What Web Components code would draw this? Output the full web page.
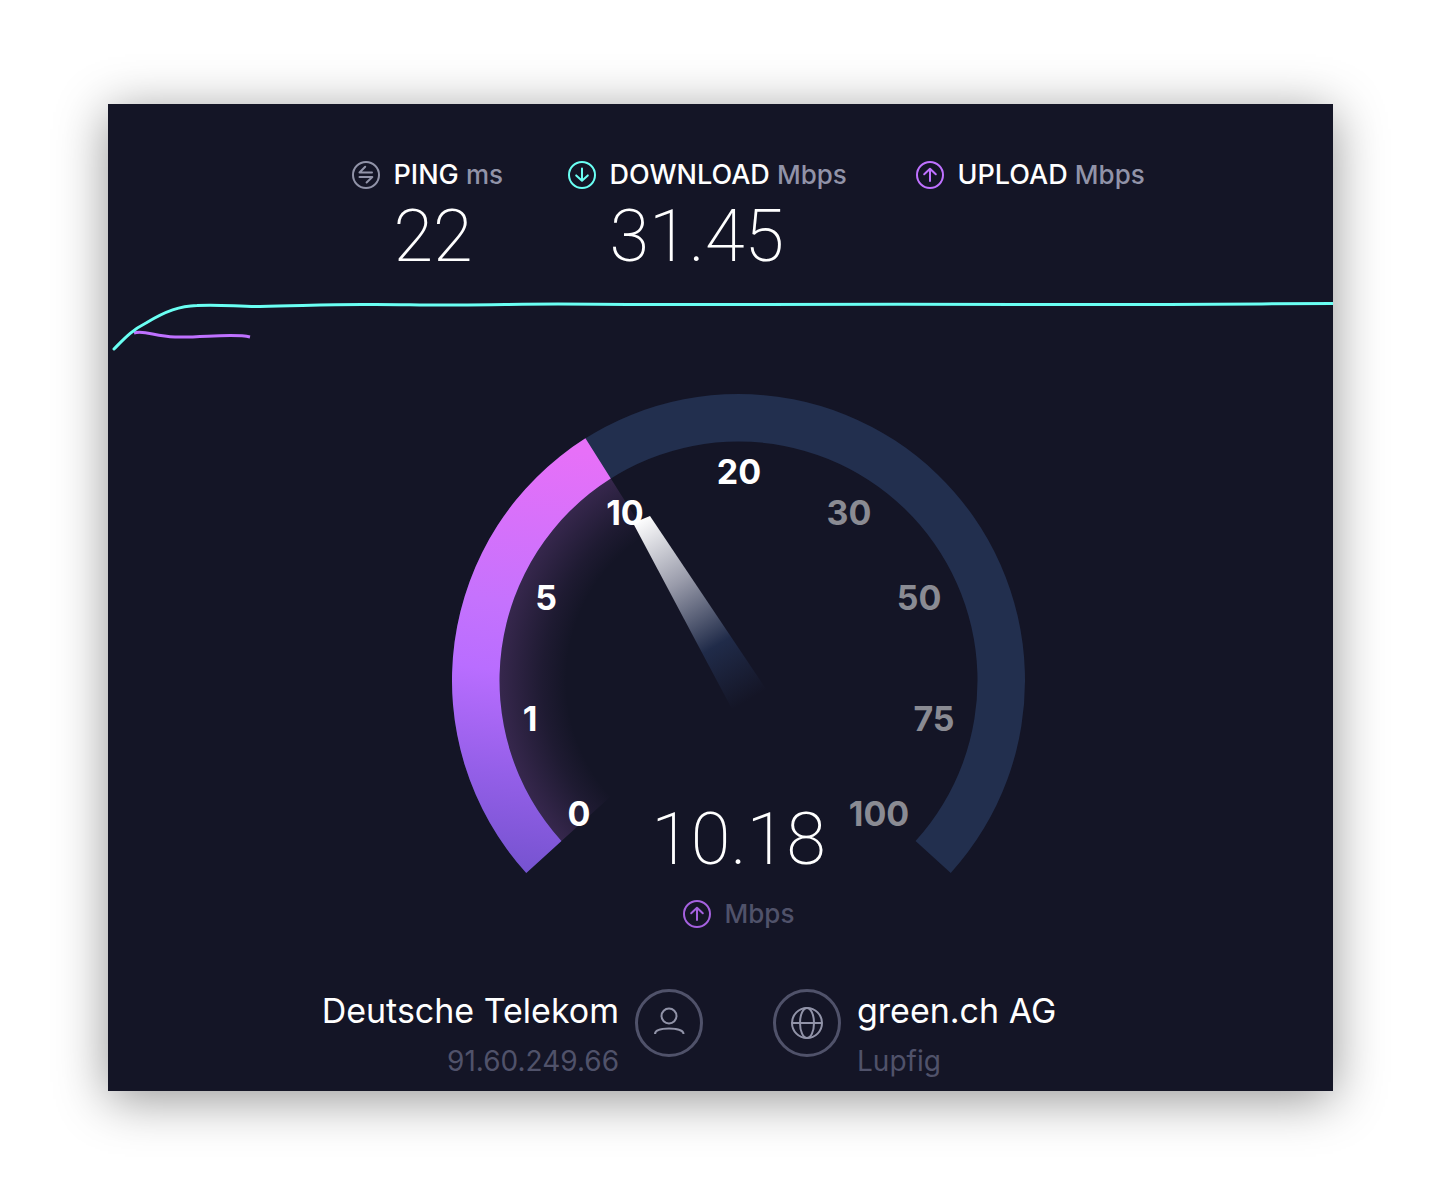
<!DOCTYPE html>
<html lang="en">
<head>
<meta charset="utf-8">
<meta name="viewport" content="width=device-width, initial-scale=1">
<title>Speed test</title>
<style>
  :root {
    --card: #141526;
    --track: #222f4e;
    --muted: #9193a8;
    --dim: #50526a;
    --download: #6afff3;
    --upload: #bf71ff;
  }
  body {
    margin: 0;
    padding: 104px 108px;
    background: #fff;
    color: #fff;
    font-family: Inter, "Open Sans", sans-serif;
  }
</style>
</head>
<body>
<speed-card>
  <speed-results slot="results">
    <speed-metric icon="ping" label="PING" unit="ms">22</speed-metric>
    <speed-metric icon="download" label="DOWNLOAD" unit="Mbps">31.45</speed-metric>
    <speed-metric icon="upload" label="UPLOAD" unit="Mbps"></speed-metric>
  </speed-results>
  <speed-chart slot="chart"></speed-chart>
  <speed-gauge slot="gauge" unit="Mbps">10.18</speed-gauge>
  <speed-hosts slot="hosts">
    <speed-host class="client" icon="user">
      Deutsche Telekom
      <span slot="detail">91.60.249.66</span>
    </speed-host>
    <speed-host icon="globe">
      green.ch AG
      <span slot="detail">Lupfig</span>
    </speed-host>
  </speed-hosts>
</speed-card>

<script>
const icons = {
  ping: `<svg viewBox="0 0 28 28" aria-hidden="true">
    <circle cx="14" cy="14" r="13"/>
    <path d="M20 11.5H7.5L13.2 5.8M7.5 16H20.3L14.6 21.5"/>
  </svg>`,
  download: `<svg viewBox="0 0 28 28" aria-hidden="true">
    <circle cx="14" cy="14" r="13"/>
    <path d="M14 7.5V19.5M8.2 14.4L14 19.8L19.8 14.4"/>
  </svg>`,
  upload: `<svg viewBox="0 0 28 28" aria-hidden="true">
    <circle cx="14" cy="14" r="13"/>
    <path d="M14 20V8M8.2 13.2L14 7.7L19.8 13.2"/>
  </svg>`,
  user: `<svg viewBox="0 0 68 68" aria-hidden="true">
    <circle cx="34" cy="27" r="7.5"/>
    <path d="M20 45C20 41 27 39.5 34 39.5S48.500 41 48.5 45"/>
  </svg>`,
  globe: `<svg viewBox="0 0 68 68" aria-hidden="true">
    <circle cx="34" cy="34" r="15"/>
    <ellipse cx="34" cy="34" rx="7" ry="15"/>
    <path d="M19 34H49"/>
  </svg>`
};

class SpeedCard extends HTMLElement {
  constructor() {
    super();
    this.attachShadow({ mode: 'open' });
    this.shadowRoot.innerHTML = `
      <style>
        :host {
          display: block;
          padding: 57px 0 14px;
          background: var(--card);
          box-shadow: 0 8px 48px rgba(0, 0, 0, 0.42);
        }
      </style>
      <slot name="results"></slot>
      <slot name="chart"></slot>
      <slot name="gauge"></slot>
      <slot name="hosts"></slot>
    `;
  }
}

class SpeedResults extends HTMLElement {
  constructor() {
    super();
    this.attachShadow({ mode: 'open' });
    this.shadowRoot.innerHTML = `
      <style>
        :host {
          display: grid;
          grid-template-columns: 152px 284px 232px;
          justify-content: center;
          gap: 64px;
          padding-left: 58px;
          height: 127px;
        }
      </style>
      <slot></slot>
    `;
  }
}

class SpeedMetric extends HTMLElement {
  constructor() {
    super();
    this.attachShadow({ mode: 'open' });
  }

  connectedCallback() {
    const icon = this.getAttribute('icon');
    this.shadowRoot.innerHTML = `
      <style>
        :host {
          display: grid;
          grid-template-columns: 28px 1fr;
          grid-template-rows: 28px auto;
          column-gap: 14px;
          align-content: start;
        }
        svg {
          width: 28px;
          height: 28px;
          fill: none;
          stroke: var(--${icon}, var(--muted));
          stroke-width: 2;
          stroke-linecap: round;
          stroke-linejoin: round;
        }
        .label {
          font-size: 27px;
          line-height: 28px;
          font-weight: 500;
          white-space: nowrap;
        }
        .unit {
          color: var(--muted);
          font-size: 26px;
        }
        .value {
          grid-column: 2;
          font-family: Roboto, sans-serif;
          font-size: 72px;
          line-height: 96px;
          font-weight: 200;
        }
      </style>
      ${icons[icon]}
      <div class="label">${this.getAttribute('label')} <span class="unit">${this.getAttribute('unit')}</span></div>
      <div class="value"><slot></slot></div>
    `;
  }
}

class SpeedChart extends HTMLElement {
  constructor() {
    super();
    this.attachShadow({ mode: 'open' });
    this.shadowRoot.innerHTML = `
      <style>
        :host { display: block; }
        svg {
          display: block;
          width: 100%;
          height: 80px;
          fill: none;
          stroke-width: 3;
        }
        .download { stroke: var(--download); stroke-linecap: round; }
        .upload { stroke: var(--upload); }
      </style>
      <svg viewBox="0 0 1225 80" preserveAspectRatio="none" role="img" aria-label="Speed over time">
        <path class="upload" d="M26 45C36 42 46 48 67 49C92 50 125 45 142 49"/>
        <path class="download" d="M6 61C16 51 24 42 38 35C58 23 72 18 89 17.500C113 16 131 19 152 18.500C190 18 214 16.500 254 16.500C290 16 314 17.500 350 17C386 17 410 16 450 16C480 16 492 16.500 520 16.500C720 15.500 860 17 1060 16.500C1120 16.500 1170 15.500 1228 15.500"/>
      </svg>
    `;
  }
}

// Dial geometry: the arc sweeps clockwise around (cx, cy)
const cx = 286.5;
const cy = 286.5;
const startAngle = 137.8;
const endAngle = 402.2;
const valueAngle = 237.7;

function point(radius, angle) {
  const rad = angle * Math.PI / 180;
  return `${(cx + radius * Math.cos(rad)).toFixed(2)} ${(cy + radius * Math.sin(rad)).toFixed(2)}`;
}

function band(outer, inner, from, to) {
  const large = to - from > 180 ? 1 : 0;
  return `M${point(outer, from)}A${outer} ${outer} 0 ${large} 1 ${point(outer, to)}` +
    `L${point(inner, to)}A${inner} ${inner} 0 ${large} 0 ${point(inner, from)}Z`;
}

const ticks = [
  [0, 127, 432],
  [1, 78, 337],
  [5, 94, 216],
  [10, 173, 131],
  [20, 287, 90],
  [30, 397, 131],
  [50, 467, 216],
  [75, 482, 337],
  [100, 427, 432]
];

class SpeedGauge extends HTMLElement {
  constructor() {
    super();
    this.attachShadow({ mode: 'open' });
  }

  connectedCallback() {
    this.shadowRoot.innerHTML = `
      <style>
        :host {
          display: grid;
          justify-content: center;
          justify-items: center;
          padding: 26px 0 61px 36px;
        }
        .dial {
          grid-area: 1 / 1;
          display: block;
          width: 573px;
          height: 480px;
        }
        text {
          fill: #fff;
          font-size: 34px;
          font-weight: 700;
          text-anchor: middle;
        }
        .off { fill: #8a8b93; }
        .value {
          grid-area: 1 / 1;
          align-self: end;
          font-family: Roboto, sans-serif;
          font-size: 72px;
          line-height: 68px;
          font-weight: 200;
        }
        .unit {
          display: flex;
          align-items: center;
          gap: 14px;
          margin-top: 26px;
          color: var(--dim);
          font-size: 26px;
          line-height: 28px;
          font-weight: 500;
        }
        .unit svg {
          width: 28px;
          height: 28px;
          fill: none;
          stroke: #a561df;
          stroke-width: 2;
          stroke-linecap: round;
          stroke-linejoin: round;
        }
      </style>
      <svg class="dial" viewBox="0 0 573 480" role="img" aria-label="Upload speed">
        <defs>
          <linearGradient id="fill" gradientUnits="userSpaceOnUse" x1="90" y1="480" x2="150" y2="60">
            <stop offset="0" stop-color="#7653d0"/>
            <stop offset="0.22" stop-color="#945fe8"/>
            <stop offset="0.46" stop-color="#b96dff"/>
            <stop offset="0.62" stop-color="#c572fd"/>
            <stop offset="1" stop-color="#e770f8"/>
          </linearGradient>
          <radialGradient id="glow" gradientUnits="userSpaceOnUse" cx="${cx}" cy="${cy}" r="239">
            <stop offset="0.72" stop-color="#c070e8" stop-opacity="0"/>
            <stop offset="0.82" stop-color="#c070e8" stop-opacity="0.06"/>
            <stop offset="1" stop-color="#c070e8" stop-opacity="0.2"/>
          </radialGradient>
          <linearGradient id="needle" gradientUnits="userSpaceOnUse" x1="189" y1="124" x2="297" y2="306">
            <stop offset="0" stop-color="#fff"/>
            <stop offset="0.35" stop-color="#9a9cab"/>
            <stop offset="0.7" stop-color="#202b49"/>
            <stop offset="1" stop-color="#141526"/>
          </linearGradient>
        </defs>
        <path fill="var(--track)" d="${band(286.5, 239, startAngle, endAngle)}"/>
        <path fill="url(#glow)" d="${band(239, 160, startAngle, valueAngle)}"/>
        <path fill="url(#fill)" d="${band(286.5, 239, startAngle, valueAngle)}"/>
        <path fill="url(#needle)" d="M181 129L198 122L314 295L281 317Z"/>
        ${ticks.map(([n, x, y]) => `<text x="${x}" y="${y}" class="${n > 20 ? 'off' : 'on'}">${n}</text>`).join('')}
      </svg>
      <div class="value"><slot></slot></div>
      <div class="unit">${icons.upload}<span>${this.getAttribute('unit')}</span></div>
    `;
  }
}

class SpeedHosts extends HTMLElement {
  constructor() {
    super();
    this.attachShadow({ mode: 'open' });
    this.shadowRoot.innerHTML = `
      <style>
        :host {
          display: grid;
          grid-template-columns: 1fr 1fr;
          gap: 70px;
          padding-left: 35px;
        }
        ::slotted(.client) { flex-direction: row-reverse; text-align: right; }
      </style>
      <slot></slot>
    `;
  }
}

class SpeedHost extends HTMLElement {
  constructor() {
    super();
    this.attachShadow({ mode: 'open' });
  }

  connectedCallback() {
    this.shadowRoot.innerHTML = `
      <style>
        :host {
          display: flex;
          align-items: flex-start;
          gap: 16px;
        }
        .badge {
          box-sizing: border-box;
          display: grid;
          place-content: center;
          width: 68px;
          height: 68px;
          border: 3px solid var(--dim);
          border-radius: 50%;
        }
        svg {
          width: 68px;
          height: 68px;
          fill: none;
          stroke: var(--muted);
          stroke-width: 2;
        }
        .name {
          font-size: 34px;
          line-height: 44px;
          white-space: nowrap;
        }
        .detail {
          margin-top: 12px;
          color: var(--dim);
          font-size: 28px;
          line-height: 32px;
        }
      </style>
      <div class="badge">${icons[this.getAttribute('icon')]}</div>
      <div>
        <div class="name"><slot></slot></div>
        <div class="detail"><slot name="detail"></slot></div>
      </div>
    `;
  }
}

customElements.define('speed-card', SpeedCard);
customElements.define('speed-results', SpeedResults);
customElements.define('speed-metric', SpeedMetric);
customElements.define('speed-chart', SpeedChart);
customElements.define('speed-gauge', SpeedGauge);
customElements.define('speed-hosts', SpeedHosts);
customElements.define('speed-host', SpeedHost);
</script>
</body>
</html>
